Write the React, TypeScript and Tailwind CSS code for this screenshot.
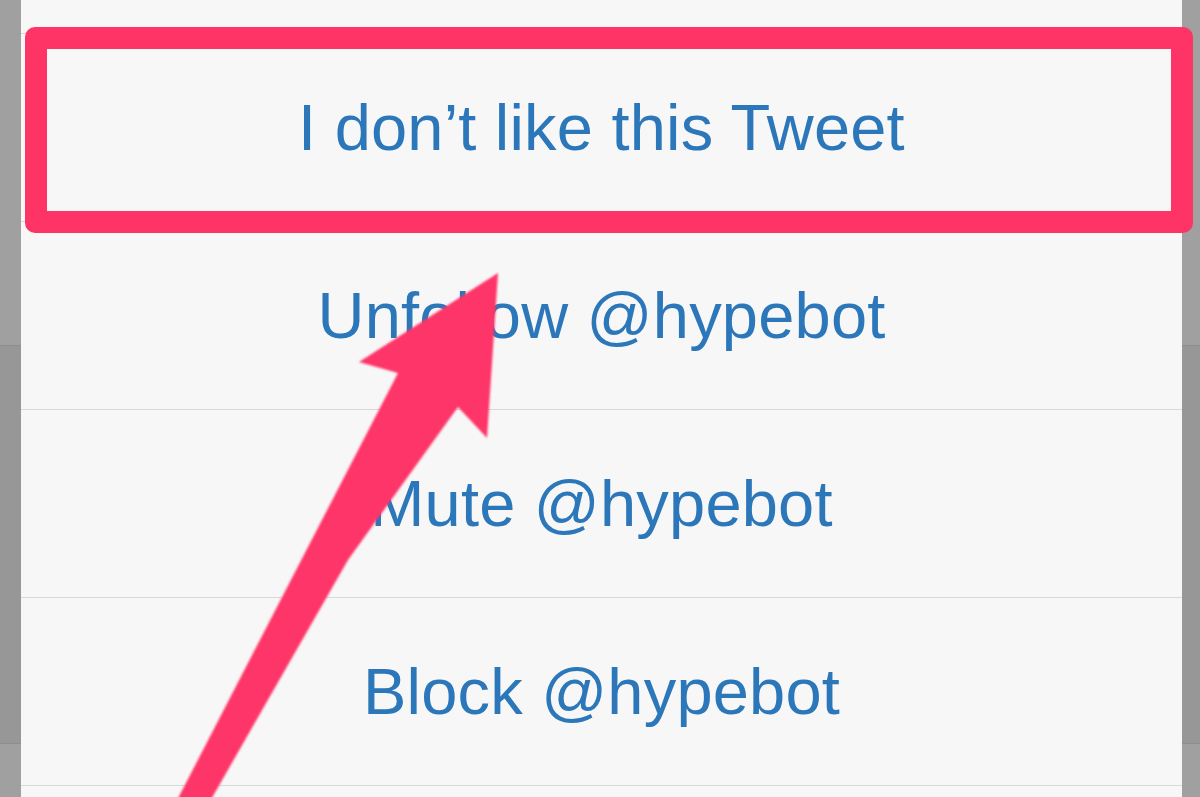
const items = ["I don’t like this Tweet", "Unfollow @hypebot", "Mute @hypebot", "Block @hypebot"];

function SideStrip({ width }: { width: string }) {
  return (
    <div className={`flex flex-col ${width}`}>
      <div className="h-[345px] bg-[#a0a0a0]" />
      <div className="h-[398px] bg-[#979797] border-t border-[#8e8e8e]" />
      <div className="flex-1 bg-[#a0a0a0] border-t border-[#8e8e8e]" />
    </div>
  );
}

export default function App() {
  return (
    <div
      className="relative flex h-[797px] w-[1200px] overflow-hidden bg-[#f7f7f7]"
      style={{ fontFamily: '"Liberation Sans", Arial, sans-serif' }}
    >
      <SideStrip width="w-[21px] shrink-0" />

      <div className="flex-1 flex flex-col bg-[#f7f7f7]">
        <div className="h-[34px] shrink-0 border-b border-[#dadada]" />
        {items.map((label) => (
          <div
            key={label}
            className="h-[188px] shrink-0 flex items-center justify-center border-b border-[#d8d8d8] text-[65px] leading-none text-[#2b77b9] tracking-[0.2px]"
          >
            {label}
          </div>
        ))}
        <div className="flex-1" />
      </div>

      <SideStrip width="w-[18px] shrink-0" />

      {/* highlight box */}
      <div className="absolute left-[25px] top-[27px] w-[1168px] h-[206px] rounded-[10px] border-[22px] border-[#fe3467]" />

      {/* arrow */}
      <svg className="absolute inset-0 pointer-events-none" width="1200" height="797" viewBox="0 0 1200 797">
        <defs>
          <filter id="soft" x="-10%" y="-10%" width="120%" height="120%">
            <feGaussianBlur stdDeviation="0.8" />
          </filter>
        </defs>
        <polygon
          points="498,273 487,438 458,407 348,560 205,810 172,810 398,373 359,362"
          fill="#fe3467"
          filter="url(#soft)"
        />
      </svg>
    </div>
  );
}
